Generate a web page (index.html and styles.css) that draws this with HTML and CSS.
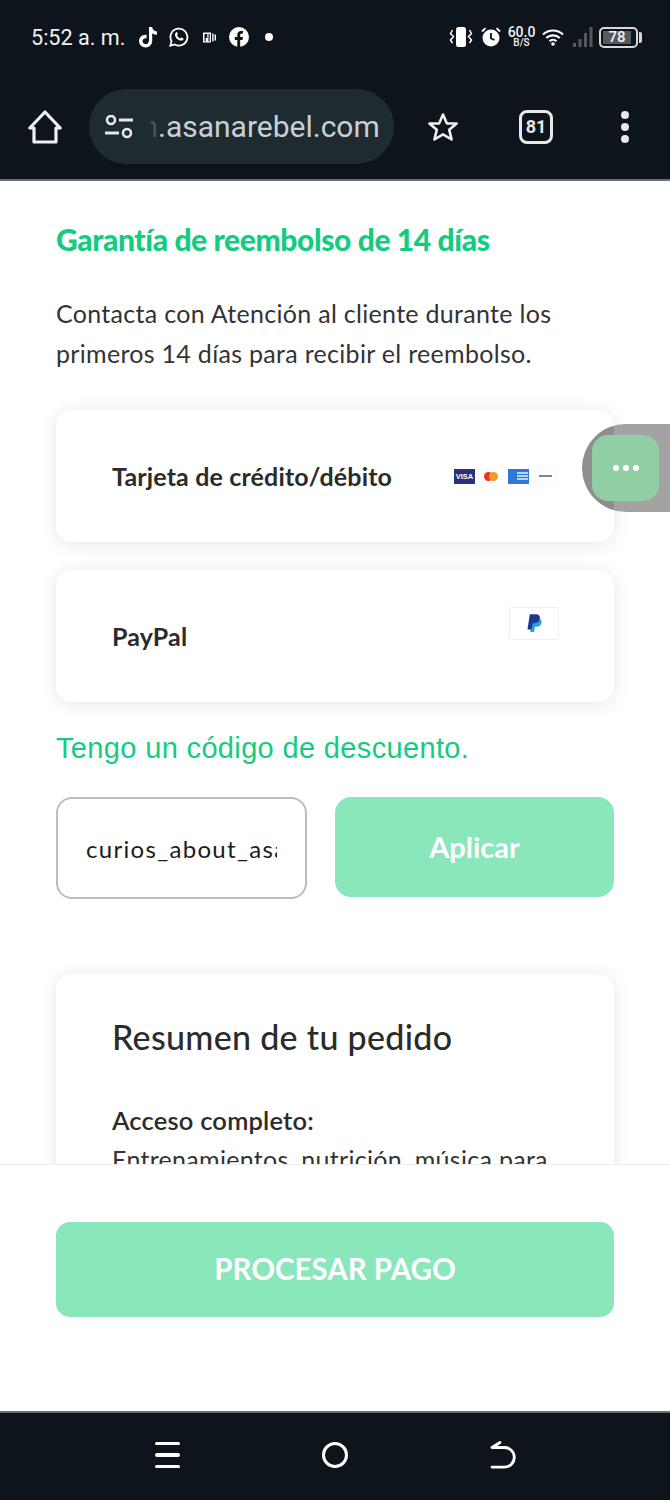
FILE: index.html
```html
<!DOCTYPE html>
<html lang="es">
<head>
    <meta charset="UTF-8">
    <meta name="viewport" content="width=device-width, initial-scale=1.0">
    <title>Asana Rebel - Pago</title>
    <link rel="stylesheet" href="styles.css">
</head>
<body>
    <div class="phone">
        <!-- Barra de estado y navegador -->
        <header class="top-bar">
            <div class="status-bar">
                <div class="status-left">
                    <span class="clock">5:52 a. m.</span>
                    <svg class="ic-tiktok" viewBox="0 0 20 22"><path fill="#fff" d="M10.5 0h3.4c.2 2.6 1.8 4.5 5 4.8v3.4c-1.900 0-3.600-.6-5-1.600v7.900c0 4-3 7.100-6.900 7.100C3.100 21.600 0 18.500 0 14.800c0-4.200 3.600-7.300 8-6.700v3.700c-2.300-.6-4.300 1-4.300 3 0 1.800 1.400 3.200 3.100 3.200 1.900 0 3.700-1.300 3.700-3.800z"/></svg>
                    <svg class="ic-whatsapp" viewBox="0 0 20 20"><path fill="none" stroke="#fff" stroke-width="1.800" d="M1.300 18.700l1.200-4.500A8.500 8.500 0 1 1 5.800 17.500z"/><path fill="#fff" d="M6.900 5.400c.6-.5 1.100-.3 1.300.2l.6 1.500c.1.400-.4.900-.7 1.300.7 1.400 1.700 2.300 3.200 3 .4-.4.800-1 1.200-.9l1.700.8c.4.200.4.900.1 1.400-.8 1-2.100 1.100-3.400.7-2.200-.7-4-2.500-4.700-4.500-.4-1.200-.1-2.600.700-3.500z"/></svg>
                    <svg class="ic-news" viewBox="0 0 14 13"><path fill="#fff" d="M1 1.500h8v10H1zM10.200 2.500h1.400v8h-1.400zM12.600 3.500H14v6h-1.400z"/><path fill="#0e141b" d="M2.500 3h2.800v4H3.700v3.500H2.500zM6.500 3h1.200v7.500H6.500z"/></svg>
                    <svg class="ic-fb" viewBox="0 0 20 20"><circle cx="10" cy="10" r="10" fill="#fff"/><path fill="#0e141b" d="M8.300 20v-7H5.800V10h2.500V7.800c0-2.500 1.500-3.900 3.700-3.900 1 0 2 .2 2 .2v2.400h-1.200c-1.200 0-1.600.8-1.600 1.500V10h2.700l-.4 3h-2.300v7z"/></svg>
                    <span class="status-dot"></span>
                </div>
                <div class="status-right">
                    <svg class="ic-vibrate" viewBox="0 0 24 20"><rect x="7" y="0" width="10" height="20" rx="2.500" fill="#fff"/><path fill="none" stroke="#fff" stroke-width="1.500" d="M3.500 3L1.500 6.500l3 3-3 3.500 2 3M20.500 3l2 3.500-3 3 3 3.500-2 3"/></svg>
                    <svg class="ic-alarm" viewBox="0 0 20 20"><circle cx="10" cy="11" r="8.500" fill="#fff"/><path fill="none" stroke="#0e141b" stroke-width="1.800" d="M10 6v5.500l3.500 1.500"/><path fill="none" stroke="#fff" stroke-width="1.800" d="M1 4.500L4.500 1.200M19 4.500L15.500 1.200"/></svg>
                    <div class="net-speed"><span class="speed-num">60.0</span><span class="speed-unit">B/S</span></div>
                    <svg class="ic-wifi" viewBox="0 0 22 18"><path fill="none" stroke="#fff" stroke-width="2.200" d="M1 6.500a14.500 14.500 0 0 1 20 0M4.300 10a9.800 9.800 0 0 1 13.400 0M7.500 13.200a5 5 0 0 1 7 0"/><circle cx="11" cy="16" r="1.800" fill="#fff"/></svg>
                    <svg class="ic-signal" viewBox="0 0 20 20"><path fill="#55595c" d="M0 16h3v4H0zM5.500 12h3v8h-3zM11 6h3v14h-3zM16.500 0h3v20h-3z"/></svg>
                    <div class="battery"><span class="battery-level">78</span></div>
                </div>
            </div>
            <div class="toolbar">
                <svg class="ic-home" viewBox="0 0 34 34"><path fill="none" stroke="#eef0f1" stroke-width="3.200" stroke-linejoin="round" d="M1.800 18L17 2l15.200 16H28v14H6V18z"/></svg>
                <div class="url-pill">
                    <svg class="ic-tune" viewBox="0 0 28 24"><circle cx="6" cy="5" r="4" fill="none" stroke="#e4e8ea" stroke-width="2.600"/><path stroke="#e4e8ea" stroke-width="2.800" d="M14 5h14M0 18h14"/><circle cx="22" cy="18" r="4" fill="none" stroke="#e4e8ea" stroke-width="2.600"/></svg>
                    <span class="url-text"><span class="url-fade">n</span>.asanarebel.com</span>
                </div>
                <svg class="ic-star" viewBox="0 0 32 30"><path fill="none" stroke="#eef0f1" stroke-width="2.600" stroke-linejoin="round" d="M16 2.500l3.900 9h9.700l-7.400 6.300 2.400 9.700-8.600-5.200-8.600 5.200 2.400-9.700-7.400-6.300h9.700z"/></svg>
                <div class="tab-count">81</div>
                <div class="menu-dots"><span></span><span></span><span></span></div>
            </div>
        </header>

        <!-- Contenido del pago -->
        <main class="content">
            <h2 class="refund-title">Garantía de reembolso de 14 días</h2>
            <p class="refund-text">Contacta con Atención al cliente durante los primeros 14 días para recibir el reembolso.</p>

            <div class="pay-card">
                <span class="pay-label">Tarjeta de crédito/débito</span>
                <div class="card-logos">
                    <span class="logo-visa">VISA</span>
                    <svg class="logo-mc" viewBox="0 0 14 9"><circle cx="4.500" cy="4.500" r="4.500" fill="#e2391f"/><circle cx="9.500" cy="4.500" r="4.500" fill="#f59b23"/></svg>
                    <span class="logo-amex"><span></span><span></span><span></span></span>
                    <span class="logo-disc"><span></span></span>
                </div>
            </div>

            <div class="pay-card paypal-card">
                <span class="pay-label">PayPal</span>
                <div class="logo-paypal">
                    <svg viewBox="0 0 16 20"><path fill="#29a0db" d="M5.500 5h6c3 0 4.500 1.500 4 4.300-.5 2.700-2.300 4.200-5 4.200H8.400L7.600 19H3.500z"/><path fill="#1b3a8c" d="M3 0h6.500c3.200 0 4.700 1.800 4.200 4.600-.6 3-2.700 5-5.800 5H6L5 16.500H.5z"/></svg>
                </div>
            </div>

            <div class="promo-label">Tengo un código de descuento.</div>
            <div class="promo-row">
                <div class="promo-input"><span class="promo-value">curios_about_asana</span></div>
                <button class="promo-button">Aplicar</button>
            </div>

            <section class="summary-card">
                <h3 class="summary-title">Resumen de tu pedido</h3>
                <div class="summary-name">Acceso completo:</div>
                <div class="summary-desc">Entrenamientos, nutrición, música para</div>
            </section>
        </main>

        <!-- Botón fijo -->
        <div class="checkout-bar">
            <button class="checkout-button">PROCESAR PAGO</button>
        </div>

        <!-- Barra de navegación Android -->
        <nav class="nav-bar">
            <div class="nav-menu"><span></span><span></span><span></span></div>
            <div class="nav-home"></div>
            <svg class="nav-back" viewBox="0 0 26 28"><path fill="none" stroke="#fff" stroke-width="2.800" stroke-linecap="round" stroke-linejoin="round" d="M10 1.500L2 6.500h12.500a9.800 9.800 0 0 1 0 19.600H2"/></svg>
        </nav>

        <!-- Botón flotante -->
        <div class="float-bubble">
            <div class="float-inner"><span></span><span></span><span></span></div>
        </div>
    </div>
</body>
</html>
```

FILE: styles.css
```css
/* Reset básico */
* {
    margin: 0;
    padding: 0;
    box-sizing: border-box;
}

body {
    font-family: 'Lato', Arial, sans-serif;
    background: #fff;
    color: #2b2b2b;
}

.phone {
    position: relative;
    width: 670px;
    height: 1500px;
    display: flex;
    flex-direction: column;
    overflow: hidden;
}

/* Barra superior */
.top-bar {
    height: 181px;
    background: #0e141b;
    border-bottom: 2px solid #6b6f72;
    flex-shrink: 0;
}

.status-bar {
    height: 74px;
    display: flex;
    justify-content: space-between;
    align-items: center;
    padding-left: 31px;
    padding-right: 29px;
}

.status-left,
.status-right {
    display: flex;
    align-items: center;
}

.clock {
    font-family: 'Roboto', Arial, sans-serif;
    font-size: 21.6px;
    color: #f2f2f2;
    width: 108px;
}

.ic-tiktok { width: 19px; height: 21px; }
.ic-whatsapp { width: 20px; height: 20px; margin-left: 11px; }
.ic-news { width: 14px; height: 13px; margin-left: 13px; }
.ic-fb { width: 20px; height: 20px; margin-left: 13px; }

.status-dot {
    width: 8px;
    height: 8px;
    border-radius: 50%;
    background: #fff;
    margin-left: 16px;
}

.ic-vibrate { width: 24px; height: 20px; }
.ic-alarm { width: 20px; height: 20px; margin-left: 8px; }

.net-speed {
    width: 27px;
    margin-left: 7px;
    display: flex;
    flex-direction: column;
    align-items: center;
    font-family: 'Roboto', Arial, sans-serif;
    color: #f2f2f2;
    font-weight: 500;
}

.speed-num { font-size: 14px; line-height: 12px; }
.speed-unit { font-size: 10px; line-height: 10px; }

.ic-wifi { width: 22px; height: 18px; margin-left: 7px; }
.ic-signal { width: 20px; height: 20px; margin-left: 9px; }

.battery {
    width: 39px;
    height: 21px;
    margin-left: 6px;
    margin-right: 3px;
    border: 2px solid #d8d8d8;
    border-radius: 5px;
    padding: 2px;
    position: relative;
}

.battery::after {
    content: '';
    position: absolute;
    right: -6px;
    top: 3px;
    width: 3px;
    height: 11px;
    background: #d8d8d8;
    border-radius: 0 2px 2px 0;
}

.battery-level {
    display: block;
    width: 28px;
    height: 13px;
    background: #55595c;
    color: #f2f2f2;
    font-family: 'Roboto', Arial, sans-serif;
    font-size: 15px;
    font-weight: 500;
    line-height: 13px;
    text-align: center;
}

.toolbar {
    height: 105px;
    display: flex;
    align-items: center;
    padding-left: 28px;
}

.ic-home { width: 34px; height: 34px; }

.url-pill {
    width: 305px;
    height: 75px;
    margin-left: 27px;
    background: #1e2b31;
    border-radius: 38px;
    display: flex;
    align-items: center;
    padding-left: 16px;
    overflow: hidden;
}

.ic-tune { width: 28px; height: 24px; flex-shrink: 0; }

.url-text {
    font-family: 'Roboto', Arial, sans-serif;
    font-size: 30px;
    color: #c9d0d3;
    margin-left: 18px;
    white-space: nowrap;
}

/* la punta de la letra asoma antes del dominio */
.url-fade {
    display: inline-block;
    width: 7px;
    overflow: hidden;
    direction: rtl;
    vertical-align: bottom;
    color: #47545a;
}

.ic-star { width: 32px; height: 30px; margin-left: 33px; }

.tab-count {
    width: 34px;
    height: 34px;
    margin-left: 60px;
    border: 3px solid #e6e8e9;
    border-radius: 8px;
    font-family: 'Roboto', Arial, sans-serif;
    font-size: 18px;
    font-weight: 700;
    color: #e6e8e9;
    line-height: 28px;
    text-align: center;
}

.menu-dots {
    margin-left: 68px;
    display: flex;
    flex-direction: column;
    gap: 4px;
}

.menu-dots span {
    width: 8px;
    height: 8px;
    border-radius: 50%;
    background: #e6e8e9;
}

/* Contenido */
.content {
    flex: 1;
    min-height: 0;
    overflow: hidden;
    padding: 0 56px;
}

.refund-title {
    margin-top: 39px;
    font-size: 30px;
    font-weight: 900;
    letter-spacing: -0.4px;
    line-height: 38px;
    color: #14cc80;
    white-space: nowrap;
}

.refund-text {
    margin-top: 35px;
    font-size: 25px;
    letter-spacing: 0.3px;
    line-height: 40px;
    color: #333;
    width: 520px;
}

.pay-card {
    height: 132px;
    margin-top: 37px;
    padding: 0 56px;
    background: #fff;
    border-radius: 16px;
    box-shadow: 0 2px 18px rgba(0, 0, 0, 0.1);
    display: flex;
    align-items: center;
    justify-content: space-between;
}

.paypal-card {
    margin-top: 28px;
}

.pay-label {
    font-size: 25px;
    font-weight: 700;
    letter-spacing: 0.16px;
    color: #2b2b2b;
}

.card-logos {
    display: flex;
    align-items: center;
    gap: 9px;
    margin-right: 2px;
}

.logo-visa {
    width: 21px;
    height: 15px;
    background: #27327f;
    color: #fff;
    font-family: 'Liberation Sans', Arial, sans-serif;
    font-size: 7.500px;
    font-weight: 700;
    line-height: 15px;
    text-align: center;
}

.logo-mc { width: 14px; height: 9px; }

.logo-amex {
    width: 21px;
    height: 15px;
    margin-left: 1px;
    padding: 3px 1px 0 9px;
    background: #2f78d6;
    display: flex;
    flex-direction: column;
    gap: 1px;
}

.logo-amex span {
    height: 2px;
    background: #b9d3f2;
}

.logo-disc {
    width: 21px;
    height: 15px;
    margin-left: -3px;
    border: 1px solid #f8f8f8;
    background: #fff;
    display: flex;
    align-items: center;
    justify-content: center;
}

.logo-disc span {
    width: 13px;
    height: 2px;
    background: #8a817b;
}

.logo-paypal {
    width: 50px;
    height: 33px;
    margin-top: -25px;
    margin-right: -1px;
    border: 1px solid #eee;
    border-radius: 3px;
    display: flex;
    align-items: center;
    justify-content: center;
}

.logo-paypal svg { width: 15px; height: 19px; }

.promo-label {
    margin-top: 29px;
    font-family: 'Liberation Sans', Arial, sans-serif;
    font-size: 29px;
    letter-spacing: 0.35px;
    line-height: 34px;
    color: #14cc80;
}

.promo-row {
    margin-top: 32px;
    display: flex;
    align-items: flex-start;
    gap: 28px;
}

.promo-input {
    width: 251px;
    height: 102px;
    border: 2px solid #bdbdbd;
    border-radius: 16px;
    padding: 0 28px;
    display: flex;
    align-items: center;
}

.promo-value {
    display: block;
    overflow: hidden;
    white-space: nowrap;
    font-size: 24px;
    letter-spacing: 1.300px;
    color: #1c1c1c;
}

.promo-button {
    flex: 1;
    height: 100px;
    padding-bottom: 2px;
    background: #8ae6bb;
    border: none;
    border-radius: 16px;
    color: #fff;
    font-family: 'Lato', Arial, sans-serif;
    font-size: 29px;
    font-weight: 700;
}

.summary-card {
    margin-top: 75px;
    padding: 40px 56px;
    height: 400px;
    background: #fff;
    border-radius: 16px;
    box-shadow: 0 2px 18px rgba(0, 0, 0, 0.1);
}

.summary-title {
    font-size: 34px;
    font-weight: 500;
    letter-spacing: 0.3px;
    line-height: 46px;
    color: #2b2b2b;
}

.summary-name {
    margin-top: 43px;
    font-size: 25.500px;
    font-weight: 600;
    letter-spacing: 0.2px;
    line-height: 34px;
}

.summary-desc {
    margin-top: 5px;
    font-size: 25px;
    letter-spacing: 0.3px;
    line-height: 34px;
    white-space: nowrap;
    color: #333;
}

/* Botón fijo */
.checkout-bar {
    height: 247px;
    flex-shrink: 0;
    background: #fff;
    border-top: 1px solid #eee;
    padding: 57px 56px 0;
}

.checkout-button {
    width: 100%;
    height: 95px;
    padding-bottom: 2px;
    background: #8ae6bb;
    border: none;
    border-radius: 14px;
    color: #fff;
    font-family: 'Lato', Arial, sans-serif;
    font-size: 29.500px;
    font-weight: 700;
}

/* Navegación Android */
.nav-bar {
    height: 89px;
    flex-shrink: 0;
    background: #0e141b;
    border-top: 2px solid #6b6f72;
    display: flex;
    align-items: center;
    padding-left: 155px;
    padding-bottom: 3px;
}

.nav-menu {
    width: 25px;
    display: flex;
    flex-direction: column;
    gap: 8px;
}

.nav-menu span {
    height: 3.5px;
    border-radius: 2px;
    background: #fff;
}

.nav-home {
    width: 26px;
    height: 26px;
    margin-left: 142px;
    border: 3.5px solid #fff;
    border-radius: 50%;
}

.nav-back {
    width: 26px;
    height: 28px;
    margin-left: 142px;
}

/* Botón flotante */
.float-bubble {
    position: absolute;
    left: 582px;
    top: 424px;
    width: 100px;
    height: 88px;
    border-radius: 44px 0 0 44px;
    background: linear-gradient(90deg, #8e8e8e 32px, #a3a3a3 32px);
    padding: 11px 0 0 10px;
}

.float-inner {
    width: 67px;
    height: 66px;
    border-radius: 16px;
    background: #8fcfa3;
    display: flex;
    align-items: center;
    justify-content: center;
    gap: 4px;
}

.float-inner span {
    width: 6px;
    height: 6px;
    border-radius: 50%;
    background: #fff;
}
```
